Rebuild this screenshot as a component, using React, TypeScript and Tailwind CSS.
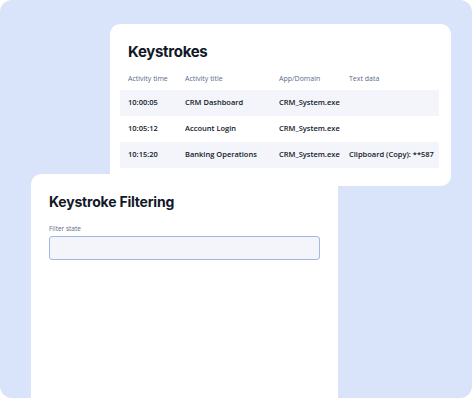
import React from "react";

const ROWS = [
  { time: "10:00:05", title: "CRM Dashboard", app: "CRM_System.exe", text: "" },
  { time: "10:05:12", title: "Account Login", app: "CRM_System.exe", text: "" },
  { time: "10:15:20", title: "Banking Operations", app: "CRM_System.exe", text: "Clipboard (Copy): **587" },
];

const body = { fontFamily: '"Open Sans", "Noto Sans", sans-serif' };
const head = { fontFamily: 'Inter, "Noto Sans", sans-serif' };

export default function App() {
  return (
    <div className="h-[401px] w-[474px] bg-white">
      <div className="h-[398px] w-[472px] overflow-hidden rounded-[12px] bg-[#d9e4fb]">
        {/* activity table card */}
        <div className="ml-[110px] mt-[24px] h-[162px] w-[341px] rounded-[10px] bg-white pl-[10px] pr-[12px] pt-[17px]">
          <h2 style={head} className="pl-[8px] text-[15px] font-bold leading-[22px] tracking-[-0.3px] text-[#111827]">
            Keystrokes
          </h2>
          <div style={body} className="mt-[6px] grid h-[21px] grid-cols-[57px_94px_70px_1fr] items-center pl-[8px] text-[7px] text-[#5a6a8a]">
            <span>Activity time</span>
            <span>Activity title</span>
            <span>App/Domain</span>
            <span>Text data</span>
          </div>
          <div style={body}>
            {ROWS.map((r, i) => (
              <div
                key={r.time}
                className={`grid h-[26px] grid-cols-[57px_94px_70px_1fr] items-center pl-[8px] text-[7.5px] font-semibold text-[#111827] ${
                  i % 2 === 0 ? "bg-[#f3f5fa]" : "bg-white"
                }`}
              >
                <span>{r.time}</span>
                <span>{r.title}</span>
                <span>{r.app}</span>
                <span>{r.text}</span>
              </div>
            ))}
          </div>
        </div>

        {/* filter card */}
        <div className="relative -mt-[12px] ml-[31px] h-[240px] w-[307px] rounded-tl-[10px] bg-white px-[18px] pt-[18px]">
          <h2 style={head} className="text-[14px] font-bold leading-[20px] tracking-[-0.2px] text-[#111827]">
            Keystroke Filtering
          </h2>
          <p style={body} className="mt-[12px] text-[6.5px] leading-[10px] text-[#5a6a8a]">
            Filter state
          </p>
          <div className="mt-[2px] h-[24px] w-[271px] rounded-[3px] border border-[#a4b8e6] bg-[#f3f5fa]" />
        </div>
      </div>
    </div>
  );
}
